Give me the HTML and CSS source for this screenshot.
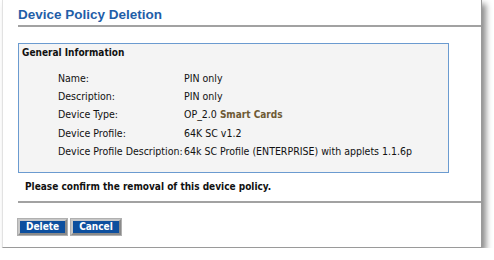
FILE: index.html
```html
<!DOCTYPE html>
<html>
<head>
<meta charset="utf-8">
<link rel="stylesheet" href="styles.css">
</head>
<body>
<div class="panel">
  <h1 class="title">Device Policy Deletion</h1>
  <div class="info">
    <div class="info-head">General Information</div>
    <div class="rows">
      <div class="row"><span class="label">Name:</span><span class="value">PIN only</span></div>
      <div class="row"><span class="label">Description:</span><span class="value">PIN only</span></div>
      <div class="row"><span class="label">Device Type:</span><span class="value">OP_2.0 <span class="type">Smart Cards</span></span></div>
      <div class="row"><span class="label">Device Profile:</span><span class="value">64K SC v1.2</span></div>
      <div class="row"><span class="label">Device Profile Description:</span><span class="value">64k SC Profile (ENTERPRISE) with applets 1.1.6p</span></div>
    </div>
  </div>
  <p class="confirm">Please confirm the removal of this device policy.</p>
  <div class="actions">
    <button class="btn">Delete</button>
    <button class="btn">Cancel</button>
  </div>
</div>
</body>
</html>
```

FILE: styles.css
```css
html, body {
  margin: 0;
  padding: 0;
  background: #ffffff;
}

.panel {
  box-sizing: border-box;
  margin-left: 2px;
  width: 480px;
  height: 248px;
  background: #ffffff;
  border-left: 1px solid #e2e2e2;
  border-right: 1px solid #9a9a9a;
  border-bottom: 1px solid #9a9a9a;
  box-shadow: 4px 4px 6px rgba(0, 0, 0, 0.45);
  padding: 5px 0 0 15px;
  font-family: "DejaVu Sans Condensed", "DejaVu Sans", Verdana, sans-serif;
  font-stretch: condensed;
  font-size: 10px;
  color: #111;
}

.title {
  margin: 0;
  font-family: "Liberation Sans", Arial, sans-serif;
  font-stretch: normal;
  font-size: 13.5px;
  font-weight: bold;
  color: #1f5ea8;
  line-height: 19px;
  padding-bottom: 1px;
  border-bottom: 2px solid #a2a2a2;
}

.info {
  box-sizing: border-box;
  margin-top: 16px;
  width: 431px;
  height: 130px;
  background: #f4f4f4;
  border: 1px solid #6b9bd0;
  padding: 2px 0 0 3px;
}

.info-head {
  font-weight: bold;
  line-height: 14px;
}

.rows {
  margin-top: 9px;
  padding-left: 36px;
  display: flex;
  flex-direction: column;
  font-size: 10.5px;
}

.row {
  display: flex;
  line-height: 18px;
}

.label {
  width: 126px;
  flex: none;
  white-space: nowrap;
}

.value {
  white-space: nowrap;
}

.type {
  font-weight: bold;
  color: #6e5a34;
  font-size: 10px;
}

.confirm {
  margin: 0;
  padding: 7px 0 0 7px;
  height: 21px;
  font-weight: bold;
  line-height: 14px;
  border-bottom: 2px solid #a2a2a2;
}

.actions {
  display: flex;
  gap: 4px;
  margin-top: 16px;
}

.btn {
  box-sizing: border-box;
  height: 16px;
  padding: 0 6px;
  margin: 0;
  background: #0d4f9e;
  color: #ffffff;
  font-family: "DejaVu Sans Condensed", "DejaVu Sans", Verdana, sans-serif;
  font-stretch: condensed;
  font-size: 10px;
  font-weight: bold;
  line-height: 12px;
  border: 2px solid;
  border-color: #c8c8c8 #8a8a8a #8a8a8a #c8c8c8;
  outline: 1px solid #b0b0b0;
}
```
